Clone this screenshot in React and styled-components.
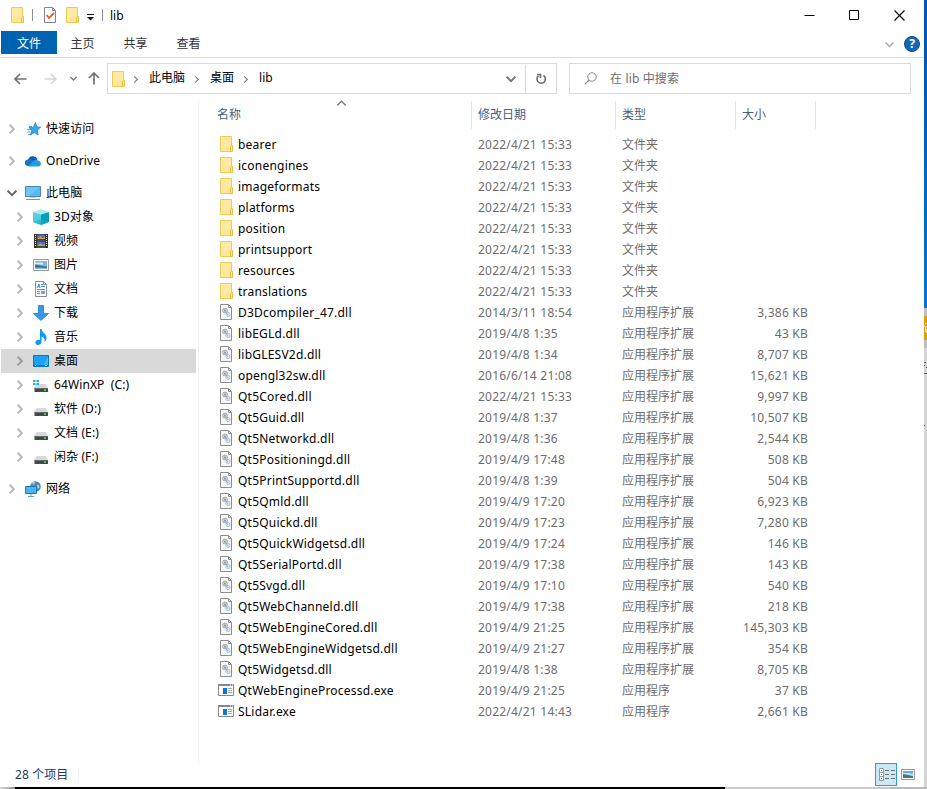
import styled, { createGlobalStyle } from 'styled-components';

const folders = [
  'bearer',
  'iconengines',
  'imageformats',
  'platforms',
  'position',
  'printsupport',
  'resources',
  'translations',
].map((name) => ({
  icon: 'folder',
  name,
  date: '2022/4/21 15:33',
  type: '文件夹',
}));

const libraries = [
  ['D3Dcompiler_47.dll', '2014/3/11 18:54', '3,386 KB'],
  ['libEGLd.dll', '2019/4/8 1:35', '43 KB'],
  ['libGLESV2d.dll', '2019/4/8 1:34', '8,707 KB'],
  ['opengl32sw.dll', '2016/6/14 21:08', '15,621 KB'],
  ['Qt5Cored.dll', '2022/4/21 15:33', '9,997 KB'],
  ['Qt5Guid.dll', '2019/4/8 1:37', '10,507 KB'],
  ['Qt5Networkd.dll', '2019/4/8 1:36', '2,544 KB'],
  ['Qt5Positioningd.dll', '2019/4/9 17:48', '508 KB'],
  ['Qt5PrintSupportd.dll', '2019/4/8 1:39', '504 KB'],
  ['Qt5Qmld.dll', '2019/4/9 17:20', '6,923 KB'],
  ['Qt5Quickd.dll', '2019/4/9 17:23', '7,280 KB'],
  ['Qt5QuickWidgetsd.dll', '2019/4/9 17:24', '146 KB'],
  ['Qt5SerialPortd.dll', '2019/4/9 17:38', '143 KB'],
  ['Qt5Svgd.dll', '2019/4/9 17:10', '540 KB'],
  ['Qt5WebChanneld.dll', '2019/4/9 17:38', '218 KB'],
  ['Qt5WebEngineCored.dll', '2019/4/9 21:25', '145,303 KB'],
  ['Qt5WebEngineWidgetsd.dll', '2019/4/9 21:27', '354 KB'],
  ['Qt5Widgetsd.dll', '2019/4/8 1:38', '8,705 KB'],
].map(([name, date, size]) => ({
  icon: 'dll',
  name,
  date,
  type: '应用程序扩展',
  size,
}));

const programs = [
  ['QtWebEngineProcessd.exe', '2019/4/9 21:25', '37 KB'],
  ['SLidar.exe', '2022/4/21 14:43', '2,661 KB'],
].map(([name, date, size]) => ({
  icon: 'exe',
  name,
  date,
  type: '应用程序',
  size,
}));

const files = [...folders, ...libraries, ...programs];

const tree = [
  { icon: 'star', label: '快速访问', last: true },
  { icon: 'cloud', label: 'OneDrive', last: true },
  { icon: 'computer', label: '此电脑', open: true },
  { icon: 'cube', label: '3D对象', nested: true },
  { icon: 'film', label: '视频', nested: true },
  { icon: 'picture', label: '图片', nested: true },
  { icon: 'document', label: '文档', nested: true },
  { icon: 'download', label: '下载', nested: true },
  { icon: 'music', label: '音乐', nested: true },
  { icon: 'desktop', label: '桌面', nested: true, selected: true },
  { icon: 'system', label: '64WinXP  (C:)', nested: true },
  { icon: 'drive', label: '软件 (D:)', nested: true },
  { icon: 'drive', label: '文档 (E:)', nested: true },
  { icon: 'drive', label: '闲杂 (F:)', nested: true, last: true },
  { icon: 'network', label: '网络' },
];

const drive = (
  <>
    <path d="M3.5 7h9l2.5 4H1z" fill="#d5d7d9" />
    <path d="M1.5 11H15v4H1.5z" fill="#45484b" />
    <path d="M1.5 11.5H15" stroke="#63676a" />
    <path d="M11 12.5h2V14h-2z" fill="#3fe04a" />
  </>
);

const icons = {
  folder: (
    <>
      <path d="M2.5.5h11v15h-11z" fill="#ffe69b" stroke="#efcb52" />
      <path d="M3 1h10v6L3 13z" fill="#fff0b5" opacity=".35" />
      <path d="M12.5 15.5v-5l1-1h1v6z" fill="#ffe69b" stroke="#e5bf42" />
    </>
  ),
  dll: (
    <>
      <path d="M2.5.5h8l3 3v12h-11z" fill="#f8f8f8" stroke="#8b8d8f" />
      <path d="M10.5.5v3h3" fill="none" stroke="#8b8d8f" />
      <circle cx="7" cy="6.5" r="2.4" fill="#d5d8db" stroke="#a3a8ad" />
      <circle cx="7" cy="6.5" r=".9" fill="#8a8f95" />
      <circle cx="10" cy="10.5" r="2.1" fill="#d7e9f5" stroke="#a8c8de" />
      <path d="m7 7 3 4" stroke="#9aabb8" />
    </>
  ),
  exe: (
    <>
      <path d="M.5 2.5h15v11H.5z" fill="#fff" stroke="#85898c" />
      <path d="M0 2h16v2H0z" fill="#85898c" />
      <path d="M12 3h1m1 0h1" stroke="#fff" />
      <path d="M5 6h4v6H5z" fill="#0878dc" />
      <path d="M10 6.5h4M10 8.5h4M10 10.5h4" stroke="#a2a4a6" />
    </>
  ),
  star: (
    <>
      <path d="m10.5 1.5 1.2 4.4 4 .3-3.4 2.8.8 5-3.6-2.6L5.3 14l1.6-4.5L4 6.4h4.4z" fill="#35a9ed" stroke="#1680c9" strokeWidth=".8" />
      <path d="M4 5.5h3M2 8.5h4M2 11h3M3 13.5h2" stroke="#2b93d7" strokeWidth=".8" />
    </>
  ),
  cloud: (
    <>
      <path d="M3 8a5 5 0 0 1 9.5-2L9 12H2z" fill="#0b5cb5" />
      <path d="M3 6.5c2-1 4 0 5 1l3 5.5H3A3.2 3.2 0 0 1 3 6.5" fill="#1478cd" />
      <path d="M8 8.5c1.5-2.5 4-2.5 5.2-.8 3.6.3 3.6 5.8.3 5.8H3z" fill="#259ae5" />
    </>
  ),
  computer: (
    <>
      <path d="M.5 1.5h15v10H.5z" fill="#55b8fa" stroke="#4b88af" />
      <path d="M1 2h14L4 11H1z" fill="#83d0ff" opacity=".55" />
      <path d="M5 12.5h6" stroke="#c7ced2" />
      <path d="M1 14.5h14" stroke="#7794a8" />
    </>
  ),
  cube: (
    <>
      <path d="m0 3 8-3 8 3-8 2.5z" fill="#a2eef2" />
      <path d="m0 3 8 2.5V16l-8-3z" fill="#59cddd" />
      <path d="m16 3-8 2.5V16l8-3z" fill="#079cb7" />
      <path d="m0 13 8-3 8 3-8 3z" fill="#0bb1c8" opacity=".6" />
    </>
  ),
  film: (
    <>
      <path d="M1 1h14v14H1z" fill="#37302e" />
      <path d="M2.5 2v12M13.5 2v12" stroke="#e4e2dd" strokeDasharray="1 1" />
      <path d="M4 1.5h8v6H4zM4 8.5h8v6H4z" fill="#4770ce" />
      <path d="m5 5 3-2 1 2 3-1v2H5zm0 7 3-2 1 2 3-1v2H5z" fill="#d9a12a" />
      <path d="M4 6h8v1.5H4zM4 13h8v1.5H4z" fill="#37503e" />
    </>
  ),
  picture: (
    <>
      <path d="M.5 2.5h15v11H.5z" fill="#fff" stroke="#9b9b9b" />
      <path d="M2 4h12v8H2z" fill="#7db7e6" />
      <path d="M2 5.5h8v2H2z" fill="#d9ecf7" />
      <path d="M2 7.5c3 0 5 1 7 1.5l5 .5v2.5H2z" fill="#3f7380" />
      <path d="m2 10.5 12 .5v1H2z" fill="#83bfdc" />
    </>
  ),
  document: (
    <>
      <path d="M2.5.5h8l3 3v12h-11z" fill="#fff" stroke="#8a8c8e" />
      <path d="M10.5.5v3h3" fill="none" stroke="#8a8c8e" />
      <path d="m4 7 2-4 1 4M5 5.5h2M8 3.5h2M8 5.5h4M4 8.5h8M4 10.5h3M4 12.5h3" fill="none" stroke="#3998d4" />
      <path d="M8 10h4v3H8z" fill="#74a9cc" />
    </>
  ),
  download: (
    <path d="M5.5.5h5v8h5L8 15.5.5 8.5h5z" fill="#3599e7" stroke="#277ebf" strokeWidth=".8" />
  ),
  music: (
    <path d="M7 0h1.5c.5 4 5 4 5 9 0 2-1 3.5-2 4 .5-3.500-.5-4.500-3-5.500v5c0 2-1.500 3.500-3.500 3.500s-3-1.500-2.500-3c.5-2 2.500-2.500 4.500-2z" fill="#0b9cf2" />
  ),
  desktop: (
    <>
      <path d="M.5 2.5h15v11H.5z" fill="#1ca1f4" stroke="#0877bc" />
      <path d="m10 13 5-9v8z" fill="#46b7fb" />
      <path d="M1 12.5h14" stroke="#087bd0" />
      <path d="M2 12.5h1m9 0h2" stroke="#fff" />
    </>
  ),
  system: (
    <>
      {drive}
      <path d="M0 3h2.500v2H0zm3.500 0H6v2H3.500zM0 6h2.500v2H0zm3.500 0H6v2H3.500z" fill="#12afe8" />
    </>
  ),
  drive,
  network: (
    <>
      <circle cx="10.5" cy="5.5" r="5.3" fill="#4f87ad" />
      <path d="M6.500 2c1.500-1.500 3-1.500 4-1L9 4zm5.500 1.500 2 .5.500 2.500-2 1.500z" fill="#a9c9da" />
      <path d="M.5 5.5h11v7H.5z" fill="#49b4f8" stroke="#2378b2" />
      <path d="M6 13v2M3 15.5h6" stroke="#709fbb" />
    </>
  ),
  check: (
    <>
      <path d="M2.5.5h8l3 3v12h-11z" fill="#fff" stroke="#858585" />
      <path d="M10.5.5v3h3" fill="none" stroke="#858585" />
      <path d="m4.5 8 2.5 3 5-5" fill="none" stroke="#e95a25" strokeWidth="1.8" />
    </>
  ),
};

const Icon = ({ name }) => (
  <Glyph viewBox="0 0 16 16">{icons[name]}</Glyph>
);

const Chevron = ({ direction = 'right', color = '#777', size = 8, weight = 1.5 }) => {
  const paths = {
    right: 'M2 .5 5.5 4 2 7.5',
    down: 'M.5 2.2 4 5.8 7.5 2.2',
    up: 'M.2 5.8 4 2 7.8 5.8',
  };
  return (
    <Line viewBox="0 0 8 8" $w={size} $h={size}>
      <path d={paths[direction]} stroke={color} strokeWidth={weight} />
    </Line>
  );
};

const TitleBar = () => (
  <Title>
    <Icon name="folder" />
    <TitleRule $gap="7px" />
    <Icon name="check" />
    <TitleGap />
    <Icon name="folder" />
    <Line viewBox="0 0 8 8" $w={8} $h={8}>
      <path d="M0 1.5h7" stroke="#111" />
      <path d="M0 4h7L3.5 7.500z" fill="#111" />
    </Line>
    <TitleRule $gap="5px" />
    <TitleText>lib</TitleText>
    <Controls>
      <Line viewBox="0 0 11 11" $w={11} $h={11}>
        <path d="M.5 5.5h10" stroke="#000" />
      </Line>
      <Line viewBox="0 0 11 11" $w={11} $h={11}>
        <path d="M.5.5h9v9h-9z" stroke="#000" />
      </Line>
      <Line viewBox="0 0 11 11" $w={11} $h={11}>
        <path d="m.5.5 10 10m0-10-10 10" stroke="#000" strokeWidth="1.1" />
      </Line>
    </Controls>
  </Title>
);

const Ribbon = () => (
  <Tabs>
    <Tab $active>文件</Tab>
    <Tab>主页</Tab>
    <Tab>共享</Tab>
    <Tab>查看</Tab>
    <RibbonEnd>
      <Chevron direction="down" color="#a5a5a5" size={9} weight={1.2} />
      <Help>?</Help>
    </RibbonEnd>
  </Tabs>
);

const AddressBar = () => (
  <Navigation>
    <Arrows>
      <Line viewBox="0 0 13 12" $w={13} $h={12}>
        <path d="M12.5 6H1m5-5L1 6l5 5" stroke="#727272" strokeWidth="1.7" />
      </Line>
      <Line viewBox="0 0 13 12" $w={13} $h={12}>
        <path d="M.5 6H12M7 1l5 5-5 5" stroke="#d6d6d6" strokeWidth="1.5" />
      </Line>
      <Chevron direction="down" color="#777" size={7} />
      <Line viewBox="0 0 12 13" $w={12} $h={13}>
        <path d="M6 12.5V1M1 6l5-5 5 5" stroke="#727272" strokeWidth="1.7" />
      </Line>
    </Arrows>
    <Address>
      <Icon name="folder" />
      <Crumb>此电脑</Crumb>
      <Crumb>桌面</Crumb>
      <Crumb>lib</Crumb>
      <AddressEnd>
        <Chevron direction="down" size={10} />
      </AddressEnd>
      <Refresh>
        <Line viewBox="0 0 12 12" $w={12} $h={12}>
          <path d="M8.5 2.500A4.200 4.200 0 1 1 3.500 2.800M2 1.500h3.500v3.500" stroke="#6b6b6b" strokeWidth="1.6" />
        </Line>
      </Refresh>
    </Address>
    <Search>
      <Line viewBox="0 0 13 13" $w={13} $h={13}>
        <circle cx="8" cy="5" r="4.2" stroke="#8a8a8a" />
        <path d="M5 8 .7 12.3" stroke="#8a8a8a" strokeWidth="1.2" />
      </Line>
      在 lib 中搜索
    </Search>
  </Navigation>
);

const Sidebar = () => (
  <Tree>
    {tree.map((node) => (
      <Node
        key={node.label}
        $nested={node.nested}
        $selected={node.selected}
        $last={node.last}
      >
        <Chevron
          direction={node.open ? 'down' : 'right'}
          color={node.open ? '#666' : node.selected ? '#999' : '#b8b8b8'}
          size={10}
        />
        <Icon name={node.icon} />
        <span>{node.label}</span>
      </Node>
    ))}
  </Tree>
);

const FileList = () => (
  <Files>
    <Header>
      <HeaderCell>
        名称
        <SortMark>
          <Chevron direction="up" size={9} weight={1.1} />
        </SortMark>
      </HeaderCell>
      <HeaderCell>修改日期</HeaderCell>
      <HeaderCell>类型</HeaderCell>
      <HeaderCell>大小</HeaderCell>
    </Header>
    {files.map((file) => (
      <Row key={file.name}>
        <Name>
          <Icon name={file.icon} />
          {file.name}
        </Name>
        <Cell>{file.date}</Cell>
        <Cell $tight>{file.type}</Cell>
        <Cell $right>{file.size}</Cell>
      </Row>
    ))}
  </Files>
);

const StatusBar = () => (
  <Status>
    <Count>28 个项目</Count>
    <ViewButton $active>
      <Line viewBox="0 0 18 13" $w={18} $h={13}>
        <path d="M2.500.5h4v12h-4zM2.500 4.500h4M2.500 8.500h4" fill="#fff" stroke="#999" />
        <path d="M8 2.500h4m2 0h4M8 6.500h4m2 0h4M8 10.500h4m2 0h4" stroke="#707070" />
        <path d="M4 2.500h1" stroke="#777" />
        <path d="M4 6.500h1" stroke="#408bd6" />
        <path d="M4 10.500h1" stroke="#c52b35" />
      </Line>
    </ViewButton>
    <ViewButton>
      <Line viewBox="0 0 14 11" $w={14} $h={11}>
        <path d="M.5.5h13v10H.5z" fill="#fff" stroke="#999" />
        <path d="M2 2h10v7H2z" fill="#6da8f2" />
        <path d="M2 4h6l4 1v2H2z" fill="#c8e0ec" />
        <path d="m2 5 5 1 5 1v2H2z" fill="#437983" />
      </Line>
    </ViewButton>
  </Status>
);

const App = () => (
  <>
    <GlobalStyle />
    <Screen>
      <Window>
        <TitleBar />
        <Ribbon />
        <AddressBar />
        <Body>
          <Sidebar />
          <FileList />
        </Body>
        <StatusBar />
      </Window>
      <Backdrop>
        <Strip $h="308px" $color="linear-gradient(#0057ae, #005fb8 40%, #0875d2)" />
        <Strip $h="8px" $color="#bebfc1" />
        <Strip $h="24px" $color="#dc9e0b">
          <Line viewBox="0 0 3 24" $w={3} $h={24}>
            <path d="M1 7.500h2M0 10.500h3M1.500 11v5M2.500 13v4" stroke="#e9dec7" />
          </Line>
        </Strip>
        <Strip $h="8px" $color="#bebfc1" />
        <Strip $h="439px" $color="#d4d4d4">
          <Line viewBox="0 0 3 98" $w={3} $h={98}>
            <path d="M0 14.500h2M0 17.500h1M2 19.500h1M0 25.500h3M0 77.500h1" stroke="#566073" />
          </Line>
        </Strip>
      </Backdrop>
      <Shelf>
        <Strip $w="15px" $color="linear-gradient(90deg, #d5d5d5, #909090)" />
        <Strip $w="710px" $color="#000" />
        <Strip $w="165px" $color="#c9c9c9" />
        <Strip $w="37px" $color="#b9b9b9" />
      </Shelf>
    </Screen>
  </>
);

const GlobalStyle = createGlobalStyle`
  * {
    box-sizing: border-box;
  }
  body {
    margin: 0;
    overflow: hidden;
    color: #000;
    font-family: 'Noto Sans', 'Noto Sans CJK SC', sans-serif;
    font-size: 12px;
    line-height: 20px;
  }
`;

const Screen = styled.div`
  display: grid;
  grid-template-columns: 924px 3px;
  grid-template-rows: 787px 2px;
  width: 927px;
`;

const Window = styled.main`
  display: flex;
  flex-direction: column;
  background: #fff;
`;

const Glyph = styled.svg`
  flex: none;
  width: 16px;
  height: 16px;
`;

const Line = styled.svg`
  display: block;
  flex: none;
  width: ${({ $w }) => $w}px;
  height: ${({ $h }) => $h}px;
  fill: none;
`;

const Title = styled.header`
  display: flex;
  align-items: center;
  height: 31px;
  padding: 0 0 1px 9px;
`;

const TitleRule = styled.span`
  width: 1px;
  height: 12px;
  margin: 0 9px 0 ${({ $gap }) => $gap};
  background: #8e8e8e;
`;

const TitleGap = styled.span`
  width: 6px;

  & + svg + svg {
    margin: 4px 2px 0 7px;
  }
`;

const TitleText = styled.span`
  margin: 1px 0 0 -2px;
`;

const Controls = styled.div`
  display: flex;
  gap: 34px;
  margin-left: auto;
  padding-right: 19px;
`;

const Tabs = styled.nav`
  display: flex;
  height: 27px;
  padding-left: 1px;
  border-bottom: 1px solid #dadbdc;
`;

const Tab = styled.div`
  width: ${({ $active }) => ($active ? '56px' : '53px')};
  height: 23px;
  padding-right: ${({ $active }) => ($active ? '0' : '2px')};
  color: ${({ $active }) => ($active ? '#fff' : '#333')};
  background: ${({ $active }) => ($active ? '#0063b1' : 'transparent')};
  line-height: 26px;
  text-align: center;
`;

const RibbonEnd = styled.div`
  display: flex;
  gap: 10px;
  align-items: center;
  margin-left: auto;
  padding-right: 4px;
`;

const Help = styled.span`
  width: 16px;
  height: 16px;
  color: #fff;
  background: #1267b8;
  border: 1px solid #0b4d91;
  border-radius: 50%;
  font-size: 12px;
  font-weight: 700;
  line-height: 14px;
  text-align: center;
`;

const Navigation = styled.div`
  display: flex;
  height: 43px;
  padding: 5px 13px 7px 14px;
`;

const Arrows = styled.div`
  display: flex;
  align-items: center;
  width: 93px;

  svg:nth-child(2) {
    margin-left: 17px;
  }
  svg:nth-child(3) {
    margin-left: 13px;
  }
  svg:nth-child(4) {
    margin-left: 11px;
  }
`;

const Address = styled.div`
  display: flex;
  align-items: center;
  width: 450px;
  padding-left: 2px;
  border: 1px solid #d9d9d9;
`;

const Crumb = styled.span`
  display: flex;
  align-items: center;
  height: 28px;
  padding-bottom: 1px;

  &::before {
    box-sizing: border-box;
    width: 5px;
    height: 5px;
    margin: 2px 12px 0 8px;
    border: solid #777;
    border-width: 1.5px 1.5px 0 0;
    transform: rotate(45deg);
    content: '';
  }
  &:first-of-type::before {
    margin-left: 6px;
  }
`;

const AddressEnd = styled.span`
  margin-left: auto;
  padding-right: 9px;
`;

const Refresh = styled.span`
  display: grid;
  place-items: center;
  width: 31px;
  height: 28px;
  border-left: 1px solid #d9d9d9;
`;

const Search = styled.div`
  display: flex;
  flex: 1;
  gap: 13px;
  align-items: center;
  margin-left: 12px;
  padding-left: 14px;
  color: #6d6d6d;
  border: 1px solid #d9d9d9;
  letter-spacing: 0.15px;
`;

const Body = styled.div`
  display: flex;
  height: 662px;
`;

const Tree = styled.aside`
  width: 199px;
  padding: 16px 2px 0 1px;
  border-right: 1px solid #f2f2f2;
`;

const Node = styled.div`
  display: flex;
  align-items: center;
  height: 24px;
  margin-bottom: ${({ $last }) => ($last ? '8px' : '0')};
  padding-left: ${({ $nested }) => ($nested ? '14px' : '6px')};
  background: ${({ $selected }) => ($selected ? '#d9d9d9' : 'transparent')};
  letter-spacing: 0.1px;
  white-space: pre;

  span {
    margin-left: 5px;
  }
  svg + svg {
    margin-left: 8px;
  }
`;

const Files = styled.section`
  flex: 1;
`;

const Header = styled.div`
  display: grid;
  grid-template-columns: 273px 144px 120px 80px;
  height: 27px;
  margin-bottom: 6px;
`;

const HeaderCell = styled.div`
  position: relative;
  padding-left: 6px;
  color: #4c607a;
  border-right: 1px solid #e5e5e5;
  line-height: 28px;

  &:first-child {
    padding-left: 18px;
  }
`;

const SortMark = styled.span`
  position: absolute;
  top: -2px;
  left: 138px;
`;

const Row = styled.div`
  display: grid;
  grid-template-columns: 279px 144px 100px 86px;
  align-items: center;
  height: 21px;
  line-height: 21px;
  letter-spacing: 0.22px;
`;

const Name = styled.div`
  display: flex;
  gap: 4px;
  align-items: center;
  padding-left: 19px;

  svg {
    margin-bottom: 1px;
  }
`;

const Cell = styled.div`
  color: #6d6d6d;
  letter-spacing: ${({ $tight }) => ($tight ? '0' : 'inherit')};
  text-align: ${({ $right }) => ($right ? 'right' : 'left')};
`;

const Status = styled.footer`
  display: flex;
  align-items: center;
  height: 24px;
  padding: 0 5px 1px 0;
  color: #1e395b;
`;

const Count = styled.span`
  margin: 1px auto 0 0;
  padding: 0 10px 0 15px;
  border-right: 1px solid #f0f0f0;
  line-height: 12px;
  letter-spacing: 0.1px;
`;

const ViewButton = styled.span`
  display: grid;
  place-items: center;
  width: 22px;
  height: 23px;
  background: ${({ $active }) => ($active ? '#cce8f6' : 'transparent')};
  border: 1px solid ${({ $active }) => ($active ? '#26a0da' : 'transparent')};
`;

const Backdrop = styled.div`
  display: flex;
  flex-direction: column;
`;

const Shelf = styled.div`
  display: flex;
  grid-column: 1 / -1;
`;

const Strip = styled.div`
  width: ${({ $w }) => $w || '3px'};
  height: ${({ $h }) => $h || '2px'};
  background: ${({ $color }) => $color};
`;

export default App;
